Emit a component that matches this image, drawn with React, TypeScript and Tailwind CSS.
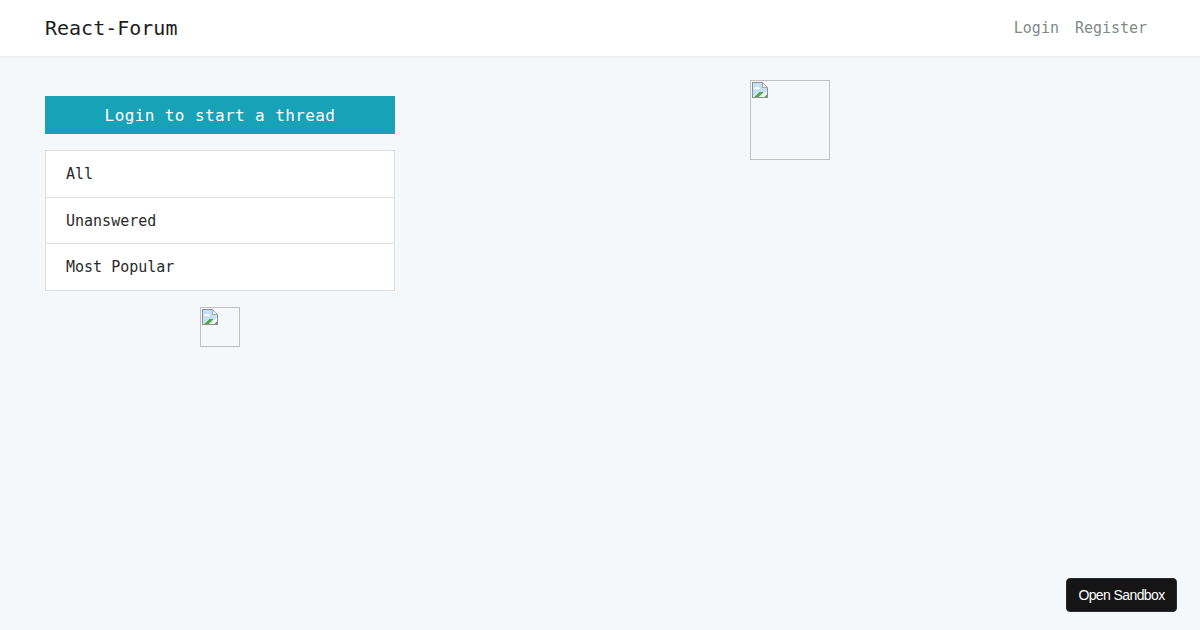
const mono = "font-['DejaVu_Sans_Mono',monospace]";

function BrokenImage({ className }: { className: string }) {
  return (
    <div className={`border border-[#c0c0c0] ${className}`}>
      <svg width="16" height="16" viewBox="0 0 16 16" className="mt-px ml-px" shapeRendering="crispEdges">
        <path d="M0.5 0.5H10.5L15.5 5.5V15.5H0.5Z" fill="#c4e0f5" stroke="#8f8f8f" />
        <path d="M10.5 0.5V5.5H15.5Z" fill="#fff" stroke="#a8a8a8" />
        <path d="M3 5h4v1h1v1H2V6h1z" fill="#fff" />
        <path d="M2 15l5-5h4l-4 5z" fill="#5aa838" />
        <path d="M8 15l7-7v3l-4 4z" fill="#fff" />
        <path d="M12 15l3-3v3z" fill="#5aa838" />
      </svg>
    </div>
  );
}

export default function App() {
  return (
    <div className={`relative h-[630px] overflow-hidden bg-[#f4f8fb] ${mono}`}>
      <nav className="flex h-14 items-center justify-between bg-white pl-[45px] pr-[53px] shadow-[0_1px_3px_rgba(0,0,0,0.06)]">
        <span className="text-xl text-[#1c1c1c]">React-Forum</span>
        <div className="flex gap-4 text-[15px] tracking-[-0.02px] text-[#7f8a88]">
          <span>Login</span>
          <span>Register</span>
        </div>
      </nav>

      <main className="flex pl-[45px] pt-6">
        <aside className="w-[350px] pt-4">
          <button className="h-[38px] w-full bg-[#17a2b8] pt-0.5 text-base tracking-[0.4px] text-white">
            Login to start a thread
          </button>
          <ul className="mt-4 border border-[#dedede] bg-white text-[15px] text-[#2a2a2a]">
            <li className="flex h-[46px] items-center pl-5">All</li>
            <li className="flex h-[46px] items-center border-t border-[#dedede] pl-5 pt-0.5">Unanswered</li>
            <li className="flex h-[47px] items-center border-t border-[#dedede] pl-5 pt-px">Most Popular</li>
          </ul>
          <BrokenImage className="mx-auto mt-4 h-10 w-10" />
        </aside>
        <div className="flex-1">
          <BrokenImage className="ml-[355px] h-20 w-20" />
        </div>
      </main>

      <button className="absolute bottom-[18px] right-[23px] h-[34px] w-[111px] rounded border border-[#2a2a2a] bg-[#151515] font-['Liberation_Sans',sans-serif] text-sm tracking-[-0.6px] text-white">
        Open Sandbox
      </button>
    </div>
  );
}
